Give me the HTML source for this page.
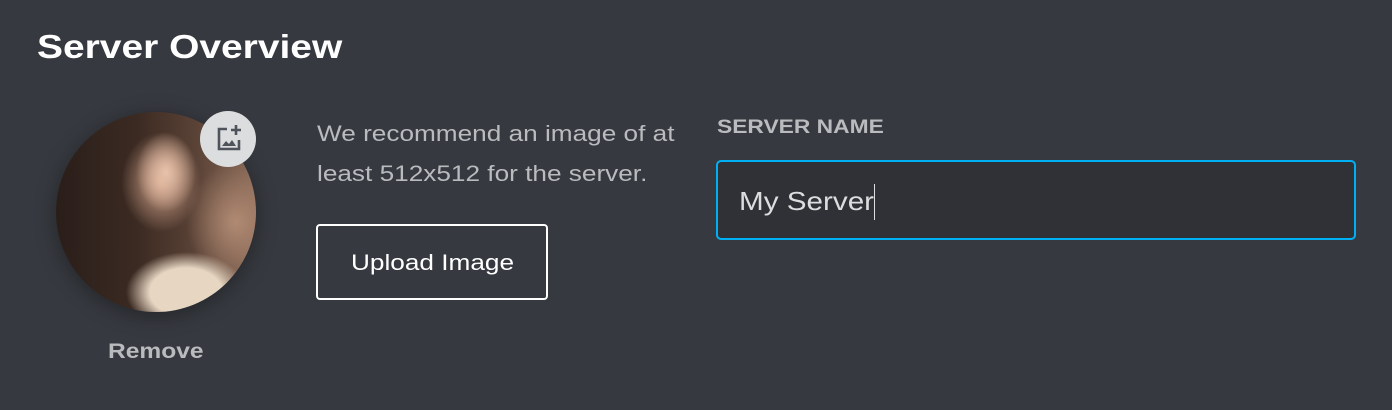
<!DOCTYPE html>
<html><head><style>
body{margin:0;width:1392px;height:410px;background:#36393f;font-family:"Liberation Sans",sans-serif;position:relative;overflow:hidden}
.a{position:absolute;white-space:nowrap;transform-origin:0 50%}
</style></head><body>
<div class="a" style="left:37px;top:28px;font-size:33px;font-weight:bold;color:#fff;transform:scaleX(1.18)">Server Overview</div>
<div class="a" style="left:56px;top:112px;width:200px;height:200px;border-radius:50%;overflow:hidden;box-shadow:0 4px 20px rgba(0,0,0,.35);background:
radial-gradient(ellipse 30px 40px at 110px 60px,#e8c2aa,transparent),
radial-gradient(ellipse 60px 40px at 130px 180px,#e6d6c2,#e6d6c2 60%,transparent),
radial-gradient(ellipse 40px 50px at 105px 70px,#d3a58d,transparent),
radial-gradient(ellipse 50px 60px at 180px 110px,#b08a73,transparent),
linear-gradient(90deg,#2a1e1a,#3b2a22 40%,#5a4236 70%,#8a6a58)"></div>
<div class="a" style="left:200px;top:111px;width:56px;height:56px;border-radius:50%;background:#dcddde">
<svg width="56" height="56" viewBox="0 0 56 56"><g fill="none" stroke="#4f545c" stroke-width="2.6"><path d="M27 18h-8v20h20v-9"/><path d="M36 14v10M31 19h10"/></g><path d="M22 35l4-5 3 3 3-4 4 6z" fill="#4f545c"/></svg></div>
<div class="a" style="left:108px;top:340px;font-size:21px;font-weight:bold;color:#b9bbbe;transform:scaleX(1.17)">Remove</div>
<div class="a" style="left:317px;top:114px;font-size:22px;line-height:40px;color:#b9bbbe;transform:scaleX(1.19)">We recommend an image of at<br>least 512x512 for the server.</div>
<div class="a" style="left:316px;top:224px;width:228px;height:72px;border:2px solid #fff;border-radius:4px"></div>
<div class="a" style="left:351px;top:250px;font-size:22px;color:#fff;transform:scaleX(1.19)">Upload Image</div>
<div class="a" style="left:717px;top:117px;font-size:19px;font-weight:bold;color:#b9bbbe;transform:scaleX(1.2)">SERVER NAME</div>
<div class="a" style="left:716px;top:160px;width:636px;height:76px;border:2px solid #00b0f4;border-radius:5px;background:#303136"></div>
<div class="a" style="left:739px;top:186px;font-size:26px;color:#dcddde;transform:scaleX(1.14)">My Server</div>
<div class="a" style="left:874px;top:184px;width:1px;height:36px;background:#dcddde"></div>
</body></html>
